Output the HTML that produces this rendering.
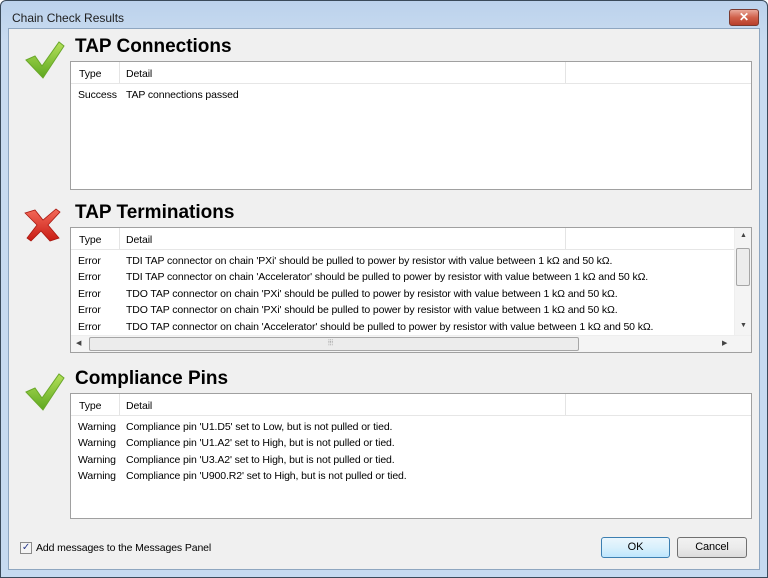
<!DOCTYPE html>
<html><head><style>
*{box-sizing:border-box;margin:0;padding:0}
body{width:768px;height:578px;overflow:hidden;background:#fff;font-family:"Liberation Sans",sans-serif;font-size:10.5px;letter-spacing:-0.12px;color:#000;position:relative}
.frame{position:absolute;left:0;top:0;width:768px;height:578px;border:1px solid #3a4a5a;border-radius:6px 6px 0 0;background:linear-gradient(#bcd2ec,#c8dbf0 40px,#c6daf0);}
.client{position:absolute;left:8px;top:28px;width:752px;height:542px;background:#f0f0f0;border:1px solid #8ea6c0}
.title{position:absolute;left:12px;top:11px;font-size:12px;letter-spacing:0;color:#1e1e1e}
.close{position:absolute;left:729px;top:9px;width:30px;height:17px;border:1px solid #7a3a30;border-radius:3px;background:linear-gradient(#e9a89a,#d0604a 50%,#b8402c);color:#fff;font-size:12px;font-weight:bold;text-align:center;line-height:15px}
h2{position:absolute;left:75px;font-size:19px;letter-spacing:0;font-weight:bold;font-family:"Liberation Sans",sans-serif}
.panel{position:absolute;left:70px;width:682px;background:#fff;border:1px solid #a0a0a0}
.hdr{height:22px;border-bottom:1px solid #e6e6e6;position:relative;background:#fff}
.hdr span{position:absolute;top:6px}
.sep{position:absolute;top:0;width:1px;height:21px;background:#e4e4e4}
.row{height:16.4px;position:relative;white-space:nowrap}
.row span{position:absolute;top:3px}
.c1{left:7px}.c2{left:55px}
.rows{padding-top:2px}
.btn{position:absolute;top:537px;height:21px;border:1px solid #707070;border-radius:3px;background:linear-gradient(#f2f2f2,#ebebeb 50%,#dcdcdc);text-align:center;line-height:19px;font-size:11px}
</style></head><body>
<div class="frame"></div>
<div class="title">Chain Check Results</div>
<div class="close">✕</div>
<div class="client"></div>

<svg style="position:absolute;left:24px;top:40px" width="42" height="40" viewBox="0 0 42 40"><defs><linearGradient id="g" x1="0" y1="0" x2="0" y2="1"><stop offset="0" stop-color="#b4e05a"/><stop offset="1" stop-color="#5ea820"/></linearGradient></defs><path d="M2 20 L11 16 L18 26 L35 2 L40 6 L19 38 Z" fill="url(#g)" stroke="#6aa82a" stroke-width="1"/></svg>
<h2 style="top:36px">TAP Connections</h2>
<div class="panel" style="top:61px;height:129px">
 <div class="hdr"><span class="c1" style="left:8px">Type</span><div class="sep" style="left:48px"></div><span style="left:55px">Detail</span><div class="sep" style="left:494px"></div></div>
 <div class="rows"><div class="row"><span class="c1">Success</span><span class="c2">TAP connections passed</span></div></div>
</div>

<svg style="position:absolute;left:24px;top:208px" width="38" height="34" viewBox="0 0 38 34"><defs><linearGradient id="r" x1="0" y1="0" x2="0" y2="1"><stop offset="0" stop-color="#f46a5a"/><stop offset="1" stop-color="#c81c14"/></linearGradient></defs><path d="M1 5 L11 2 L19 12 L32 1 L36 4 L24 17 L35 30 L26 33 L17 23 L7 33 L3 30 L13 17 Z" fill="url(#r)" stroke="#a81810" stroke-width="0.8"/></svg>
<h2 style="top:202px">TAP Terminations</h2>
<div class="panel" style="top:227px;height:126px">
 <div class="hdr"><span class="c1" style="left:8px">Type</span><div class="sep" style="left:48px"></div><span style="left:55px">Detail</span><div class="sep" style="left:494px"></div></div>
 <div class="rows">
 <div class="row"><span class="c1">Error</span><span class="c2">TDI TAP connector on chain 'PXi' should be pulled to power by resistor with value between 1 kΩ and 50 kΩ.</span></div>
 <div class="row"><span class="c1">Error</span><span class="c2">TDI TAP connector on chain 'Accelerator' should be pulled to power by resistor with value between 1 kΩ and 50 kΩ.</span></div>
 <div class="row"><span class="c1">Error</span><span class="c2">TDO TAP connector on chain 'PXi' should be pulled to power by resistor with value between 1 kΩ and 50 kΩ.</span></div>
 <div class="row"><span class="c1">Error</span><span class="c2">TDO TAP connector on chain 'PXi' should be pulled to power by resistor with value between 1 kΩ and 50 kΩ.</span></div>
 <div class="row"><span class="c1">Error</span><span class="c2">TDO TAP connector on chain 'Accelerator' should be pulled to power by resistor with value between 1 kΩ and 50 kΩ.</span></div>
 </div>
 <div style="position:absolute;left:663px;top:0;width:17px;height:107px;background:#f4f4f4;border-left:1px solid #eee"><div style="position:absolute;left:1px;top:20px;width:14px;height:38px;border:1px solid #a6a6a6;border-radius:2px;background:#ececec"></div><div style="position:absolute;top:4px;left:5px;font-size:7px;color:#444">▲</div><div style="position:absolute;top:94px;left:5px;font-size:7px;color:#444">▼</div></div>
 <div style="position:absolute;left:0;top:107px;width:680px;height:17px;background:#f4f4f4;border-top:1px solid #eee"><div style="position:absolute;left:18px;top:1px;width:490px;height:14px;border:1px solid #a6a6a6;border-radius:2px;background:#ececec"></div><div style="position:absolute;left:5px;top:3px;font-size:7px;color:#444">◀</div><div style="position:absolute;left:651px;top:3px;font-size:7px;color:#444">▶</div><div style="position:absolute;left:257px;top:2px;font-size:8px;color:#666">⦙⦙⦙</div></div>
</div>

<svg style="position:absolute;left:24px;top:372px" width="42" height="40" viewBox="0 0 42 40"><path d="M2 20 L11 16 L18 26 L35 2 L40 6 L19 38 Z" fill="url(#g)" stroke="#6aa82a" stroke-width="1"/></svg>
<h2 style="top:368px">Compliance Pins</h2>
<div class="panel" style="top:393px;height:126px">
 <div class="hdr"><span class="c1" style="left:8px">Type</span><div class="sep" style="left:48px"></div><span style="left:55px">Detail</span><div class="sep" style="left:494px"></div></div>
 <div class="rows">
 <div class="row"><span class="c1">Warning</span><span class="c2">Compliance pin 'U1.D5' set to Low, but is not pulled or tied.</span></div>
 <div class="row"><span class="c1">Warning</span><span class="c2">Compliance pin 'U1.A2' set to High, but is not pulled or tied.</span></div>
 <div class="row"><span class="c1">Warning</span><span class="c2">Compliance pin 'U3.A2' set to High, but is not pulled or tied.</span></div>
 <div class="row"><span class="c1">Warning</span><span class="c2">Compliance pin 'U900.R2' set to High, but is not pulled or tied.</span></div>
 </div>
</div>

<div style="position:absolute;left:20px;top:542px;width:12px;height:12px;border:1px solid #8a8a8a;background:#f4f4f4;font-size:10px;line-height:10px;text-align:center;color:#2a3a8a">✓</div>
<div style="position:absolute;left:36px;top:542px">Add messages to the Messages Panel</div>
<div class="btn" style="left:601px;width:69px;border-color:#3c7fb1;background:linear-gradient(#eaf6fd,#d9f0fc 50%,#bee6fd)">OK</div>
<div class="btn" style="left:677px;width:70px">Cancel</div>
</body></html>
